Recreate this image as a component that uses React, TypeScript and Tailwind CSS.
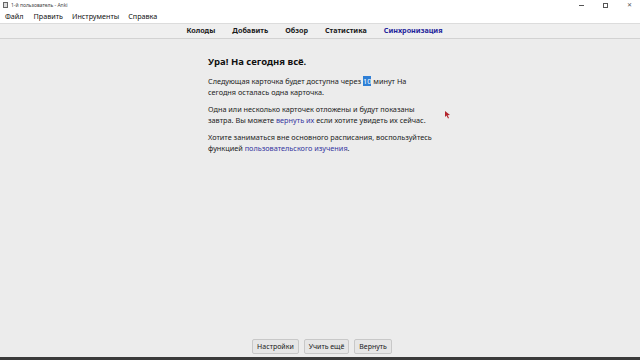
import React from 'react';

const font = { fontFamily: '"Noto Sans", "Open Sans", sans-serif' };

export default function App() {
  return (
    <div className="w-[640px] h-[360px] flex flex-col bg-[#ececec] text-[#1a1a1a] overflow-hidden" style={font}>
      {/* Title bar */}
      <div className="h-[10px] bg-white flex items-center">
        <div className="ml-[3px] w-[5px] h-[6px] border border-[#666] bg-[#ddd]" />
        <span className="ml-[3px] text-[5px] leading-none text-[#444]">1-й пользователь - Anki</span>
        <div className="ml-auto flex items-center gap-[19px] mr-[8px] text-[#555]">
          <div className="w-[5px] h-px bg-[#555]" />
          <div className="w-[5px] h-[5px] border border-[#555]" />
          <span className="text-[6px] leading-none">✕</span>
        </div>
      </div>

      {/* Menu bar */}
      <div className="h-[13px] bg-white flex items-center text-[7.2px] leading-none text-[#111] pt-[1px]">
        <span className="ml-[5px]">Файл</span>
        <span className="ml-[10px]">Править</span>
        <span className="ml-[9px]">Инструменты</span>
        <span className="ml-[9px]">Справка</span>
      </div>

      {/* Toolbar */}
      <div className="h-[16px] bg-[#efefef] border-t border-[#dcdcdc] border-b border-b-[#d2d2d2] flex items-center justify-center gap-[17px] pr-[11px] text-[7.2px] font-bold leading-none">
        <span>Колоды</span>
        <span>Добавить</span>
        <span>Обзор</span>
        <span>Статистика</span>
        <span className="text-[#23239b]">Синхронизация</span>
      </div>

      {/* Main */}
      <main className="flex-1 relative">
        <div className="ml-[208px] mt-[18px] w-[225px] text-[7.3px] leading-[11px] text-[#222]">
          <h1 className="text-[9.5px] font-bold leading-none text-[#111] mb-[9px]">Ура! На сегодня всё.</h1>
          <p className="mb-[6px]">
            Следующая карточка будет доступна через{' '}
            <span className="bg-[#2f7fd6] text-white">10</span> минут На сегодня осталась одна карточка.
          </p>
          <p className="mb-[6px]">
            Одна или несколько карточек отложены и будут показаны завтра. Вы можете{' '}
            <span className="text-[#3535a0]">вернуть их</span> если хотите увидеть их сейчас.
          </p>
          <p>
            Хотите заниматься вне основного расписания, воспользуйтесь функцией{' '}
            <span className="text-[#3535a0]">пользовательского изучения</span>.
          </p>
        </div>
        {/* mouse pointer */}
        <svg className="absolute left-[445px] top-[72px]" width="6" height="8" viewBox="0 0 6 8">
          <path d="M0 0 L0 6 L1.5 4.6 L3 7.5 L4 7 L2.6 4.2 L5 4 Z" fill="#b3242c" />
        </svg>
      </main>

      {/* Bottom buttons */}
      <div className="h-[22px] flex items-start justify-center gap-[5px] pt-[4px] pl-[4px] text-[7px] leading-none">
        <button className="h-[15px] px-[4px] bg-[#e6e6e6] border border-[#c8c8c8] rounded-[2px]">Настройки</button>
        <button className="h-[15px] px-[4px] bg-[#e6e6e6] border border-[#c8c8c8] rounded-[2px]">Учить ещё</button>
        <button className="h-[15px] px-[4px] bg-[#e6e6e6] border border-[#c8c8c8] rounded-[2px]">Вернуть</button>
      </div>
      <div className="h-[3px] bg-[#3a3a3a]" />
    </div>
  );
}
